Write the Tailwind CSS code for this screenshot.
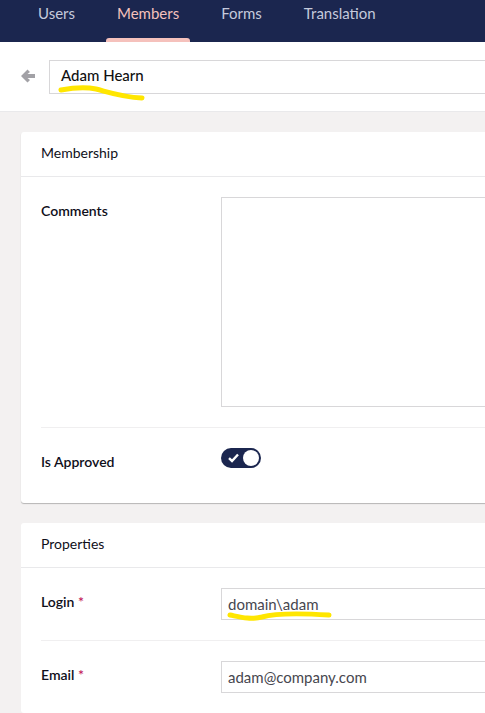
<!DOCTYPE html>
<html lang="en">
  <head>
    <meta charset="UTF-8" />
    <title>Members</title>
    <script src="https://cdn.jsdelivr.net/npm/@tailwindcss/browser@4"></script>
  </head>
  <body class="relative h-[713px] w-[485px] overflow-hidden bg-[#f3f1f1] font-['Lato',sans-serif] text-[14px] text-[#0f0f1a]">
    <nav class="flex h-[42px] w-[485px] items-start gap-[20px] bg-[#1b264f] pl-[27px] text-[15px] text-[#c5cadc]">
      <a class="h-[42px] px-[11px] pt-[2px]">Users</a>
      <a class="relative h-[42px] px-[11px] pt-[2px] text-[#f5c1bc]">
        Members
        <span class="absolute bottom-0 left-0 h-[4px] w-full rounded-t-[3px] bg-[#f5c1bc]"></span>
      </a>
      <a class="h-[42px] px-[11px] pt-[2px]">Forms</a>
      <a class="h-[42px] px-[11px] pt-[2px]">Translation</a>
    </nav>

    <header class="flex h-[70px] w-[800px] items-start border-b border-[#e9e9eb] bg-white pt-[18px] pl-[21px]">
      <svg class="mt-[9px] h-[14px] w-[14px] text-[#a2a1a6]" viewBox="0 0 14 14" fill="currentColor">
        <path d="M6.5 0.5 L9 3 L6.5 5 H14 V9 H6.5 L9 11 L6.5 13.5 L0 7 Z" />
      </svg>
      <div class="ml-[14px] flex h-[34px] w-[700px] items-center border border-[#d8d7d9] px-[11px] pb-[4px] text-[15px] font-medium text-[#111]">
        Adam Hearn
      </div>
    </header>

    <main class="flex w-[800px] flex-col gap-[20px] pt-[20px] pl-[21px]">
      <section class="h-[371px] rounded-[3px] bg-white shadow-[0_1px_1px_rgba(0,0,0,0.25)]">
        <h2 class="flex h-[45px] items-center border-b border-[#e9e9eb] pl-[20px] pb-[3px] text-[14px] font-normal">Membership</h2>
        <div class="mx-[20px] flex h-[251px] border-b border-[#f0eff0] pt-[20px]">
          <label class="w-[180px] pt-[3px] font-semibold">Comments</label>
          <div class="h-[210px] w-[500px] border border-[#d8d7d9]"></div>
        </div>
        <div class="mx-[20px] flex pt-[20px]">
          <label class="w-[180px] pt-[3px] font-semibold">Is Approved</label>
          <div class="relative flex h-[20px] w-[40px] items-center rounded-full bg-[#1b264f]">
            <svg class="absolute left-[7px] top-[5px] h-[10px] w-[11px]" viewBox="0 0 11 10" fill="none" stroke="#fff" stroke-width="2.4">
              <path d="M1 5.2 L4 8 L10 1.5" />
            </svg>
            <span class="absolute left-[22px] top-[2px] h-[16px] w-[16px] rounded-full bg-white"></span>
          </div>
        </div>
      </section>

      <section class="h-[190px] rounded-[3px] bg-white">
        <h2 class="flex h-[45px] items-center border-b border-[#e9e9eb] pl-[20px] pb-[3px] text-[14px] font-normal">Properties</h2>
        <div class="mx-[20px] flex h-[73px] border-b border-[#f0eff0] pt-[20px]">
          <label class="w-[180px] pt-[3px] font-semibold">Login <span class="text-[#c2185b]">*</span></label>
          <div class="flex h-[32px] w-[500px] items-center border border-[#d8d7d9] px-[6px] text-[15px] text-[#47474f]">domain\adam</div>
        </div>
        <div class="mx-[20px] flex pt-[20px]">
          <label class="w-[180px] pt-[3px] font-semibold">Email <span class="text-[#c2185b]">*</span></label>
          <div class="flex h-[32px] w-[500px] items-center border border-[#d8d7d9] px-[6px] text-[15px] text-[#47474f]">adam@company.com</div>
        </div>
      </section>
    </main>

    <!-- highlighter marks over the screenshot -->
    <svg class="absolute left-0 top-0 h-[713px] w-[485px]" viewBox="0 0 485 713" fill="none" stroke="#ffe600" stroke-width="5" stroke-linecap="round">
      <path d="M61 90 C72 88 86 87 96 89 C108 92 122 97 142 98" />
      <path d="M230 615 C240 617 250 620 262 617 C276 613 296 613 329 615" />
    </svg>
  </body>
</html>
